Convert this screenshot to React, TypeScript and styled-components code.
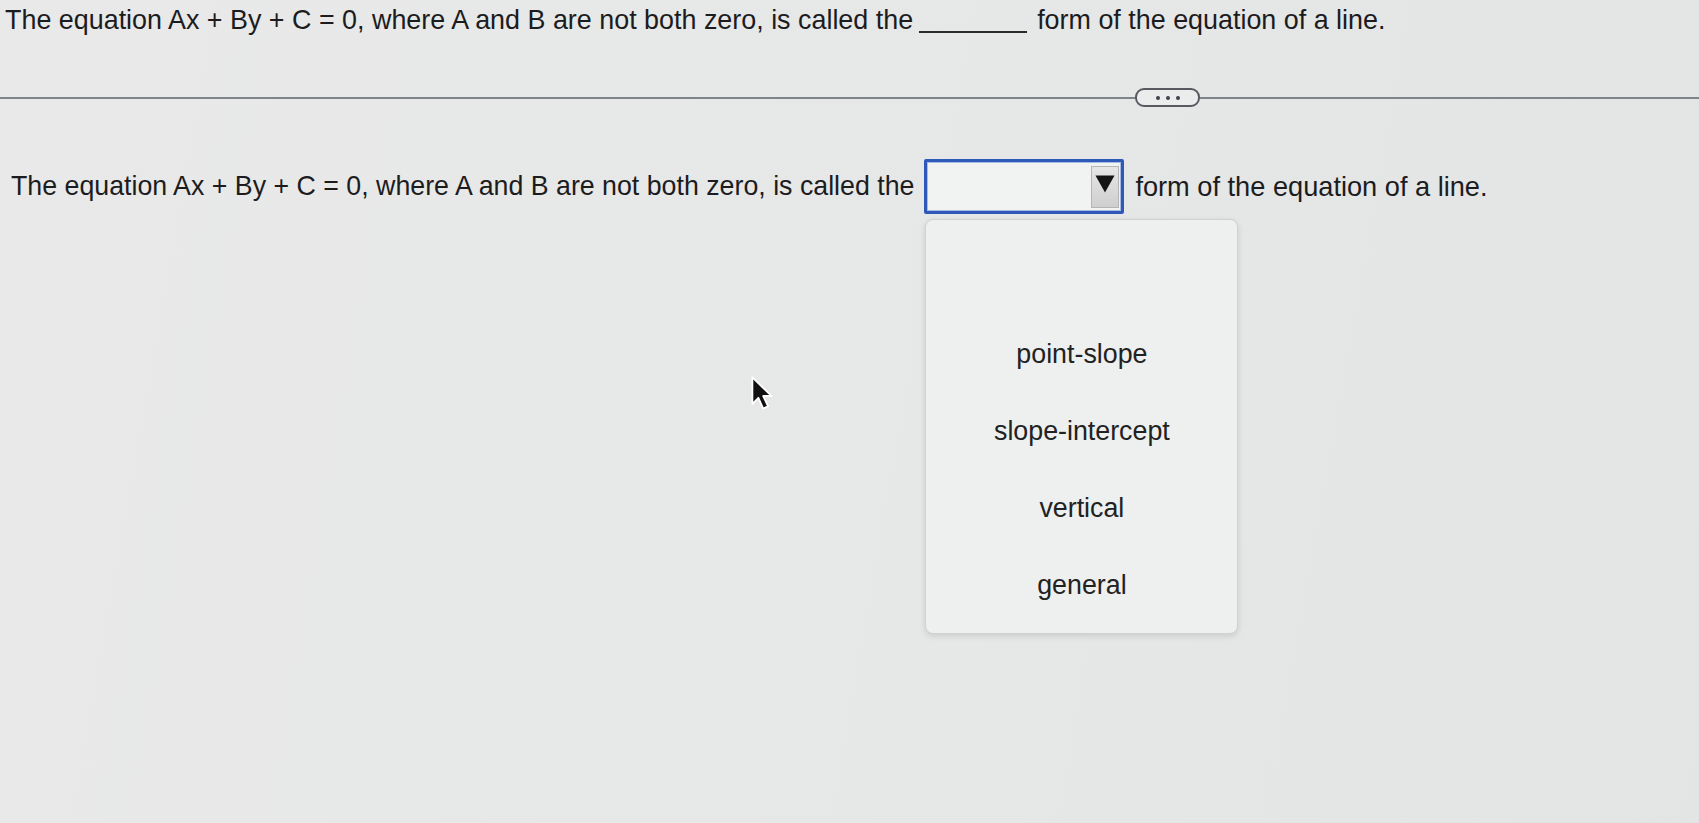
import React from "react";
import styled, { createGlobalStyle } from "styled-components";

const options = ["", "point-slope", "slope-intercept", "vertical", "general"];

export default function App() {
  return (
    <>
      <GlobalStyle />
      <Page>
        <Question>
          The equation Ax + By + C = 0, where A and B are not both zero, is called the
          <Blank />
          form of the equation of a line.
        </Question>

        <Divider>
          <LeftLine />
          <MoreButton>
            <Dot />
            <Dot />
            <Dot />
          </MoreButton>
          <RightLine />
        </Divider>

        <Answer>
          The equation Ax + By + C = 0, where A and B are not both zero, is called the
          <SelectWrap>
            <SelectBox>
              <ArrowButton>
                <svg width="20" height="18" viewBox="0 0 20 18">
                  <path d="M0.5 0.5 L19.5 0.5 L10 17.5 Z" fill="#141414" />
                </svg>
              </ArrowButton>
            </SelectBox>
            <Menu>
              {options.map((o, i) => (
                <Option key={i}>{o}</Option>
              ))}
            </Menu>
          </SelectWrap>
          <Tail>form of the equation of a line.</Tail>
        </Answer>

        <Cursor width="24" height="36" viewBox="0 0 20 30">
          <path
            d="M2 2 L2 24 L7 19 L11 28 L15 26 L11 17.5 L18 17.5 Z"
            fill="#111"
            stroke="#fff"
            strokeWidth="1.5"
            strokeLinejoin="round"
          />
        </Cursor>
      </Page>
    </>
  );
}

// style
const GlobalStyle = createGlobalStyle`
  html, body {
    margin: 0;
    padding: 0;
    background: #e7e8e8;
  }
  body {
    font-family: "Liberation Sans", Arial, sans-serif;
    color: #1c1c1e;
  }
`;

const Page = styled.div`
  position: relative;
  width: 1699px;
  height: 823px;
  overflow: hidden;
  background: linear-gradient(100deg, #e9e9e9 0%, #e6e7e7 55%, #e3e4e4 100%);
`;

const Question = styled.p`
  margin: 0;
  padding: 4px 0 0 5px;
  font-size: 26.9px;
  line-height: 32px;
  white-space: nowrap;
  display: flex;
  align-items: baseline;
`;

const Blank = styled.span`
  display: inline-block;
  width: 108px;
  height: 2px;
  margin: 0 10px 0 6px;
  background: #2a2a2a;
  transform: translateY(4px);
`;

const Divider = styled.div`
  display: flex;
  align-items: center;
  margin-top: 52px;
  height: 19px;
`;

const LeftLine = styled.div`
  width: 1135px;
  height: 2px;
  background: #7f8489;
`;

const RightLine = styled.div`
  flex: 1;
  height: 2px;
  background: #7f8489;
`;

const MoreButton = styled.div`
  width: 61px;
  height: 15px;
  border: 2px solid #575b61;
  border-radius: 9px;
  background: #ebecec;
  display: flex;
  align-items: center;
  justify-content: center;
  gap: 6px;
`;

const Dot = styled.span`
  width: 4px;
  height: 4px;
  border-radius: 50%;
  background: #3f4349;
`;

const Answer = styled.div`
  display: flex;
  align-items: center;
  margin-top: 52px;
  padding-left: 11px;
  font-size: 26.76px;
  white-space: nowrap;
`;

const Tail = styled.span`
  font-size: 27.2px;
`;

const SelectWrap = styled.div`
  position: relative;
  margin: 0 11px 0 10px;
`;

const SelectBox = styled.div`
  width: 192px;
  height: 49px;
  border: 3px solid #2f59b8;
  border-radius: 2px;
  background: #f1f2f2;
  box-shadow: inset 0 0 0 1px #a7bae2;
  display: flex;
  align-items: center;
  justify-content: flex-end;
  padding-right: 2px;
  box-sizing: content-box;
`;

const ArrowButton = styled.div`
  width: 28px;
  height: 42px;
  border: 1px solid #b5b5b5;
  background: linear-gradient(#e6e6e6, #cfcfcf);
  display: flex;
  align-items: flex-start;
  justify-content: center;
  padding-top: 8px;
  box-sizing: border-box;
`;

const Menu = styled.ul`
  position: absolute;
  top: 60px;
  left: 1px;
  width: 313px;
  height: 415px;
  margin: 0;
  padding: 19px 0 11px;
  box-sizing: border-box;
  list-style: none;
  background: #eeefef;
  border: 1px solid #d0d1d2;
  border-radius: 8px;
  box-shadow: 0 2px 6px rgba(0, 0, 0, 0.12);
  z-index: 2;
`;

const Option = styled.li`
  height: 77px;
  display: flex;
  align-items: center;
  justify-content: center;
  font-size: 26.8px;
  color: #222;
`;

const Cursor = styled.svg`
  position: absolute;
  left: 750px;
  top: 375px;
  z-index: 3;
`;
